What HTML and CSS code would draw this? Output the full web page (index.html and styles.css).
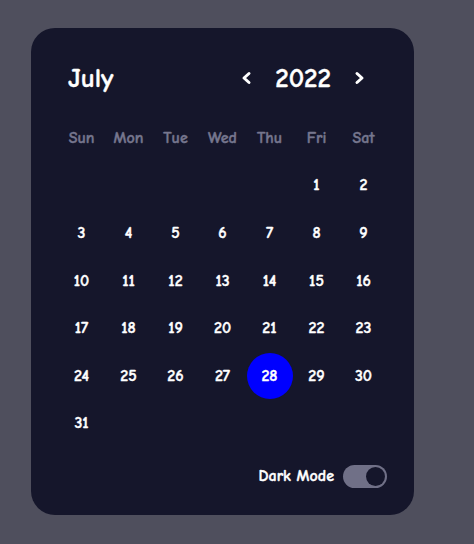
FILE: index.html
```html
<!DOCTYPE html>
<html lang="en">
<head>
<meta charset="utf-8">
<title>Calendar</title>
<link rel="stylesheet" href="styles.css">
</head>
<body>
<div class="calendar">
  <div class="cal-header">
    <span class="month">July</span>
    <div class="year-nav">
      <button class="nav-btn" aria-label="Previous year">
        <svg width="11" height="14" viewBox="0 0 11 14"><polyline points="8,2.5 3,7 8,11.5" fill="none" stroke="#fff" stroke-width="3" stroke-linecap="round" stroke-linejoin="round"/></svg>
      </button>
      <span class="year">2022</span>
      <button class="nav-btn" aria-label="Next year">
        <svg width="11" height="14" viewBox="0 0 11 14"><polyline points="3,2.5 8,7 3,11.5" fill="none" stroke="#fff" stroke-width="3" stroke-linecap="round" stroke-linejoin="round"/></svg>
      </button>
    </div>
  </div>

  <div class="grid">
    <span class="wd">Sun</span><span class="wd">Mon</span><span class="wd">Tue</span><span class="wd">Wed</span><span class="wd">Thu</span><span class="wd">Fri</span><span class="wd">Sat</span>

    <span class="day empty"></span><span class="day empty"></span><span class="day empty"></span><span class="day empty"></span><span class="day empty"></span>
    <span class="day">1</span><span class="day">2</span>
    <span class="day">3</span><span class="day">4</span><span class="day">5</span><span class="day">6</span><span class="day">7</span><span class="day">8</span><span class="day">9</span>
    <span class="day">10</span><span class="day">11</span><span class="day">12</span><span class="day">13</span><span class="day">14</span><span class="day">15</span><span class="day">16</span>
    <span class="day">17</span><span class="day">18</span><span class="day">19</span><span class="day">20</span><span class="day">21</span><span class="day">22</span><span class="day">23</span>
    <span class="day">24</span><span class="day">25</span><span class="day">26</span><span class="day">27</span><span class="day selected">28</span><span class="day">29</span><span class="day">30</span>
    <span class="day">31</span>
  </div>

  <div class="cal-footer">
    <span class="mode-label">Dark Mode</span>
    <span class="toggle on"><span class="knob"></span></span>
  </div>
</div>
</body>
</html>
```

FILE: styles.css
```css
html, body {
  margin: 0;
  padding: 0;
}

body {
  background: #4f4f5d;
  font-family: "Comic Sans MS", "Comic Neue", "Open Sans", sans-serif;
  color: #fff;
  height: 544px;
  overflow: hidden;
}

.calendar {
  box-sizing: border-box;
  margin: 28px 0 0 31px;
  width: 383px;
  height: 487px;
  background: #15162b;
  border-radius: 24px;
  padding: 30px 27px 27px 27px;
  display: flex;
  flex-direction: column;
  /* heavier strokes for the handwritten face */
  -webkit-text-stroke: 0.4px currentColor;
}

.cal-header {
  height: 40px;
  display: flex;
  align-items: center;
  justify-content: space-between;
  padding: 0 22px 0 10px;
}

.month,
.year {
  font-size: 27px;
  font-weight: 700;
}

.year-nav {
  display: flex;
  align-items: center;
  gap: 23px;
}

.nav-btn {
  background: none;
  border: 0;
  padding: 0;
  width: 11px;
  height: 14px;
  display: flex;
  cursor: pointer;
}

.grid {
  margin-top: 16px;
  display: grid;
  grid-template-columns: repeat(7, 47px);
  grid-auto-rows: 47.6px;
  justify-items: center;
  align-items: center;
}

.wd {
  font-size: 16px;
  font-weight: 700;
  color: #76768e;
}

.day {
  width: 46px;
  height: 46px;
  border-radius: 50%;
  display: flex;
  align-items: center;
  justify-content: center;
  font-size: 16px;
  font-weight: 700;
  color: #fff;
}

.day.selected {
  background: #0000ff;
}

.cal-footer {
  margin-top: auto;
  display: flex;
  align-items: center;
  justify-content: flex-end;
  gap: 9px;
  height: 24px;
}

.mode-label {
  font-size: 16px;
  font-weight: 700;
}

.toggle {
  box-sizing: border-box;
  width: 44px;
  height: 23px;
  border-radius: 12px;
  background: #707087;
  display: flex;
  align-items: center;
  padding: 0 2px;
}

.toggle.on {
  justify-content: flex-end;
}

.knob {
  width: 19px;
  height: 19px;
  border-radius: 50%;
  background: #15162b;
}
```
